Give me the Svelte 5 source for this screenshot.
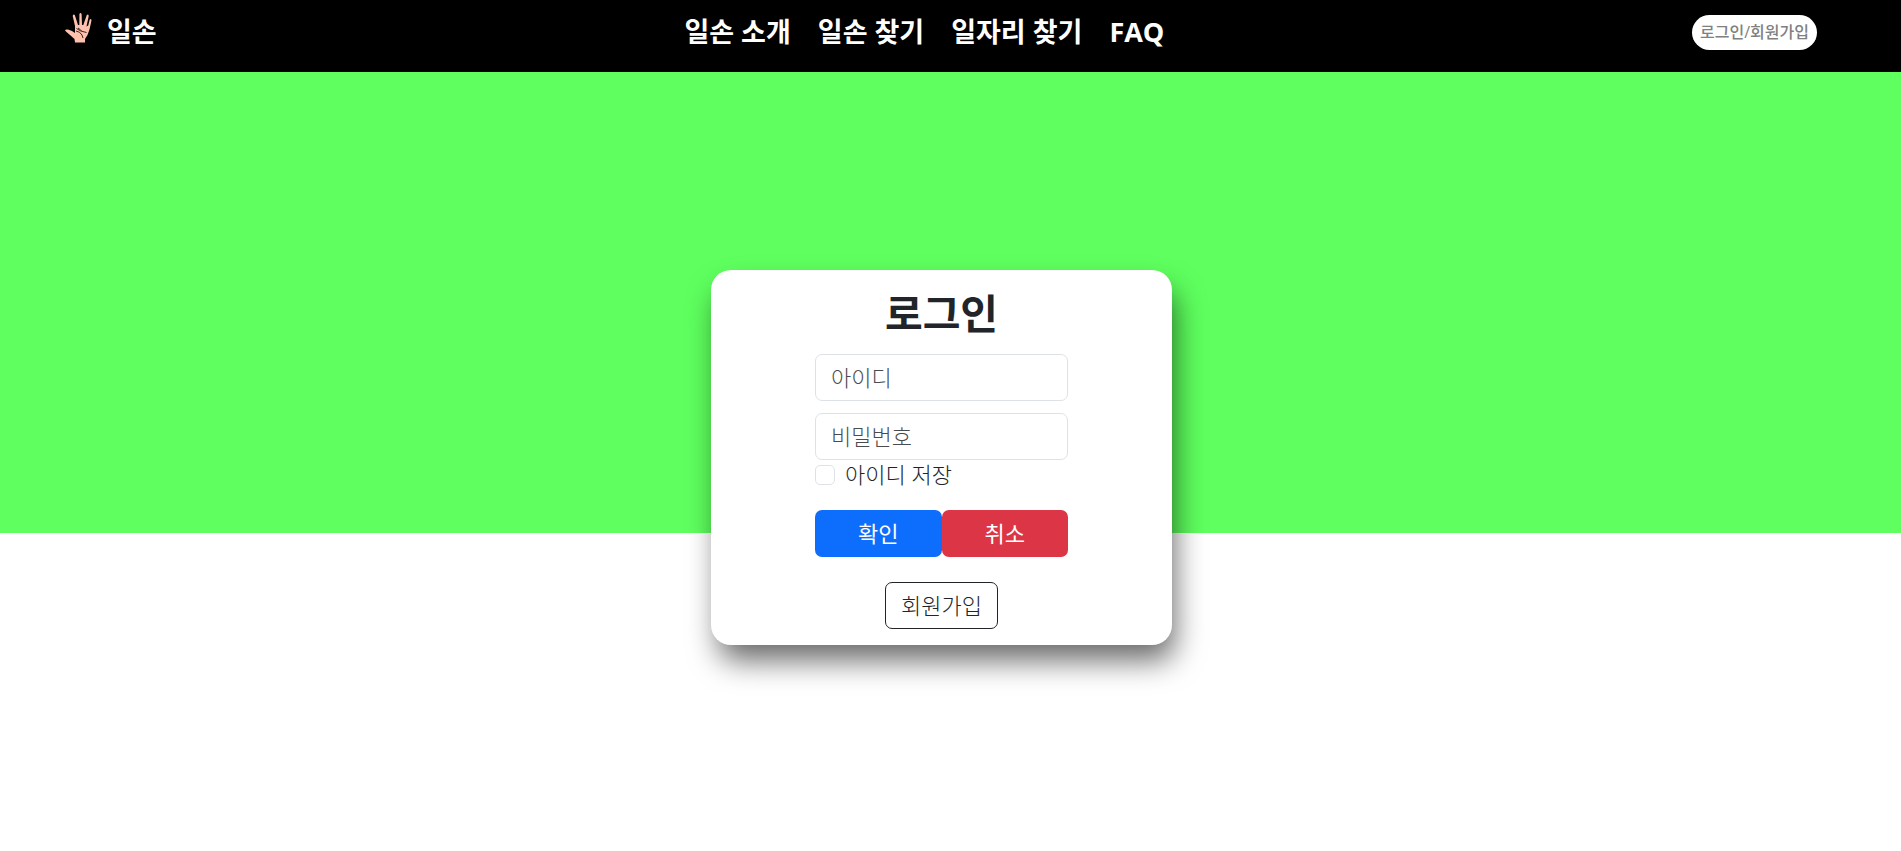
<script lang="ts">
  interface NavItem { label: string; href: string }

  const navItems: NavItem[] = [
    { label: '일손 소개', href: '#about' },
    { label: '일손 찾기', href: '#workers' },
    { label: '일자리 찾기', href: '#jobs' },
    { label: 'FAQ', href: '#faq' },
  ];

  let userId = $state('');
  let password = $state('');
  let saveId = $state(false);

  function cancel() {
    userId = '';
    password = '';
  }
</script>

<header class="site-header">
  <a class="brand" href="#home">
    <svg class="brand-icon" viewBox="0 0 36 40" aria-hidden="true">
      <path
        d="M15 34.5 14.5 31 10 27 6.5 24 5 22.5Q5.500 21 8 21.500L12 23 15 25 15 18 12.700 8Q13 5.500 14.800 7L18 17 19.300 17 19.400 6Q20.400 4 21.600 6L22 17 23.300 17 26.800 7Q28.600 5.500 28.700 8L26.500 18.500 28.200 17.500 29.700 11.500Q31.500 10 31.500 12.500L29.500 21.500 27.500 27 25 31 25 34.500Z"
        fill="#ffc0ad"
      />
      <path
        d="M16.500 20.500Q20 23.500 26.500 24.500M16 23Q20 23.500 22 27L23 30M18 20Q20 21 21.500 23"
        fill="none"
        stroke="#3a2822"
        stroke-width="1"
      />
    </svg>
    <span>일손</span>
  </a>
  <nav class="site-nav">
    {#each navItems as item}
      <a href={item.href}>{item.label}</a>
    {/each}
  </nav>
  <button type="button" class="account-btn">로그인/회원가입</button>
</header>

<main>
  <form class="login-card" onsubmit={(e) => e.preventDefault()}>
    <h1>로그인</h1>
    <div class="fields">
      <input class="text-field" type="text" placeholder="아이디" aria-label="아이디" bind:value={userId} />
      <input class="text-field" type="password" placeholder="비밀번호" aria-label="비밀번호" bind:value={password} />
    </div>
    <label class="save-id">
      <input type="checkbox" bind:checked={saveId} />
      <span>아이디 저장</span>
    </label>
    <div class="actions">
      <button type="submit" class="btn confirm">확인</button>
      <button type="button" class="btn cancel" onclick={cancel}>취소</button>
    </div>
    <button type="button" class="btn signup">회원가입</button>
  </form>
</main>

<style>
  :global(body) {
    margin: 0;
    background: #fff;
    color: #212529;
    font-family: "Open Sans", "Noto Sans CJK KR", sans-serif;
    font-size: 22px;
    font-weight: 300;
    line-height: 33px;
  }
  .site-header {
    display: flex;
    align-items: flex-start;
    justify-content: space-between;
    box-sizing: border-box;
    height: 72px;
    padding: 12px 84px 0 60px;
    background: #000;
    font-size: 27px;
    font-weight: 700;
    line-height: 40px;
  }
  .brand,
  .site-nav a {
    color: #fff;
    text-decoration: none;
  }
  .brand {
    display: flex;
    gap: 11px;
  }
  .brand-icon {
    width: 36px;
    height: 40px;
    margin-top: -4px;
  }
  .site-nav {
    display: flex;
    gap: 27px;
  }
  .account-btn {
    height: 35px;
    margin-top: 3px;
    padding: 0 8px 2px;
    border: 0;
    border-radius: 18px;
    background: #fff;
    color: #808080;
    font: inherit;
    font-size: 16px;
    font-weight: 500;
    line-height: 24px;
  }
  main {
    box-sizing: border-box;
    min-height: calc(100vh - 72px);
    padding: 198px 18px 60px 0;
    background: linear-gradient(#5eff5e 461px, #fff 461px);
  }
  .login-card {
    display: flex;
    flex-direction: column;
    align-items: center;
    box-sizing: border-box;
    width: 461px;
    margin: 0 auto;
    padding: 16px 104px;
    border-radius: 20px;
    background: #fff;
    box-shadow: 5px 18px 30px -3px rgba(0, 0, 0, 0.6);
  }
  h1 {
    margin: 0 0 14px;
    font-size: 41px;
    font-weight: 700;
    line-height: 54px;
  }
  .fields {
    display: grid;
    gap: 12px;
    width: 100%;
  }
  .text-field {
    box-sizing: border-box;
    width: 100%;
    height: 47px;
    padding: 5px 15px 7px;
    border: 1px solid #dee2e6;
    border-radius: 7px;
    background: #fff;
    color: #212529;
    font: inherit;
  }
  .text-field::placeholder {
    color: #494c4f;
    opacity: 1;
  }
  .save-id {
    display: flex;
    align-items: center;
    align-self: flex-start;
    gap: 10px;
    height: 30px;
  }
  .save-id span {
    padding-bottom: 2px;
  }
  .save-id input {
    appearance: none;
    width: 20px;
    height: 20px;
    margin: 0;
    border: 1px solid #dee2e6;
    border-radius: 5px;
    background: #fff;
  }
  .save-id input:checked {
    background: #0d6efd;
  }
  .actions {
    display: grid;
    grid-template-columns: 1fr 1fr;
    width: 100%;
    margin: 20px 0 25px;
  }
  .btn {
    height: 47px;
    padding: 6px 15px;
    border: 1px solid transparent;
    border-radius: 7px;
    color: #fff;
    font: inherit;
  }
  .confirm {
    background: #0d6efd;
    font-weight: 400;
  }
  .cancel {
    background: #dc3545;
    font-weight: 400;
  }
  .signup {
    border-color: #212529;
    background: transparent;
    color: #212529;
  }
</style>
